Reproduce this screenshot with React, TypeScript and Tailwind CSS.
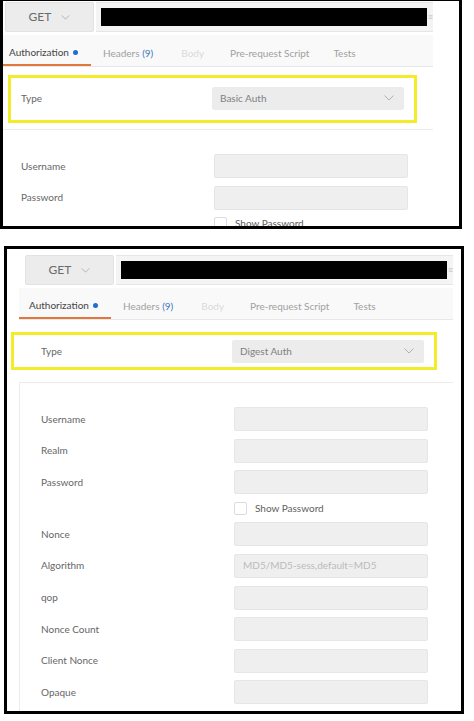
import type { ReactNode } from "react";

type Field = { label: string; placeholder?: string; checkbox?: boolean };

const BASIC: Field[] = [
  { label: "Username" },
  { label: "Password" },
  { label: "", checkbox: true },
];

const DIGEST: Field[] = [
  { label: "Username" },
  { label: "Realm" },
  { label: "Password" },
  { label: "", checkbox: true },
  { label: "Nonce" },
  { label: "Algorithm", placeholder: "MD5/MD5-sess,default=MD5" },
  { label: "qop" },
  { label: "Nonce Count" },
  { label: "Client Nonce" },
  { label: "Opaque" },
];

function Chevron({ className }: { className?: string }) {
  return (
    <svg viewBox="0 0 10 6" className={className} fill="none" stroke="currentColor" strokeWidth="1">
      <polyline points="0.5,0.5 5,5 9.5,0.5" />
    </svg>
  );
}

function Tab({ children, className }: { children: ReactNode; className?: string }) {
  return <div className={`flex items-center pt-[5px] ${className ?? ""}`}>{children}</div>;
}

function RequestView({ auth, fields }: { auth: string; fields: Field[] }) {
  return (
    <div className="w-[434px] shrink-0 bg-white text-[10px] text-[#666]">
      {/* method + url */}
      <div className="flex h-[37px] items-start bg-white pl-[6px] pt-[4px]">
        <div className="flex h-[30px] w-[92px] items-center justify-center gap-[10px] rounded-[2px] border border-[#e2e2e2] bg-[#ececec] text-[12px] text-[#6a6a6a]">
          GET
          <Chevron className="h-[5px] w-[9px] text-[#aaa]" />
        </div>
        <div className="ml-[2px] flex h-[30px] flex-1 items-center border-y border-[#e6e6e6] bg-[#f4f4f4] pl-[5px]">
          <div className="h-[18px] w-[326px] bg-black" />
          <span className="ml-[1px] text-[9px] text-[#bbb]">≡</span>
        </div>
      </div>

      {/* tabs */}
      <div className="flex h-[32px] items-stretch border-b border-[#e8e8e8] bg-[#f9f9f9]">
        <Tab className="w-[92px] border-b-2 border-[#e0783c] pl-[10px] text-[#444]">
          Authorization
          <span className="ml-[4px] h-[5px] w-[5px] rounded-full bg-[#1f6fd0]" />
        </Tab>
        <Tab className="ml-[12px] text-[#a0a0a0]">
          Headers&nbsp;<span className="text-[#3a78bd]">(9)</span>
        </Tab>
        <Tab className="ml-[28px] text-[#d9d9d9]">Body</Tab>
        <Tab className="ml-[26px] text-[#a0a0a0]">Pre-request Script</Tab>
        <Tab className="ml-[24px] text-[#a0a0a0]">Tests</Tab>
      </div>

      {/* type */}
      <div className="flex h-[62px] items-center">
        <div className="w-[213px] pl-[22px]">Type</div>
        <div className="flex h-[23px] w-[192px] items-center justify-between rounded-[2px] bg-[#ececec] pl-[8px] pr-[10px] text-[#808080]">
          {auth}
          <Chevron className="h-[6px] w-[10px] text-[#b0b0b0]" />
        </div>
      </div>

      {/* fields */}
      <div className="flex flex-col gap-[7.6px] border-l border-t border-[#ececec] pt-[24px] pb-[12px]">
        {fields.map((f, i) =>
          f.checkbox ? (
            <div key={i} className="flex h-[13px] items-center">
              <div className="w-[214px]" />
              <span className="h-[13px] w-[13px] rounded-[2px] border border-[#dcdcdc] bg-white" />
              <span className="ml-[8px] text-[#5e5e5e]">Show Password</span>
            </div>
          ) : (
            <div key={i} className="flex h-[24px] items-center">
              <div className="w-[214px] pl-[21px]">{f.label}</div>
              <div className="flex h-[24px] w-[194px] items-center rounded-[2px] border border-[#e6e6e6] bg-[#efefef] pl-[8px] text-[#bbbbbb]">
                {f.placeholder}
              </div>
            </div>
          ),
        )}
      </div>
    </div>
  );
}

export default function App() {
  return (
    <div className="min-h-[721px] w-[474px] bg-white font-['Lato','Open_Sans',sans-serif]">
      <div className="relative h-[229px] w-[462px] overflow-hidden border-x-[3px] border-b-[3px] border-t border-black">
        <div className="-ml-[4px] -mt-[3px]">
          <RequestView auth="Basic Auth" fields={BASIC} />
        </div>
        <div className="absolute left-[5px] top-[74px] h-[48px] w-[409px] border-[3px] border-[#f2ec2a]" />
      </div>

      <div className="relative ml-[4px] mt-[17px] h-[468px] w-[460px] overflow-hidden border-[3px] border-black">
        <div className="ml-[12px] mt-[2px]">
          <RequestView auth="Digest Auth" fields={DIGEST} />
        </div>
        <div className="absolute left-[4px] top-[83px] h-[38px] w-[426px] border-[3px] border-[#f2ec2a]" />
      </div>
    </div>
  );
}
